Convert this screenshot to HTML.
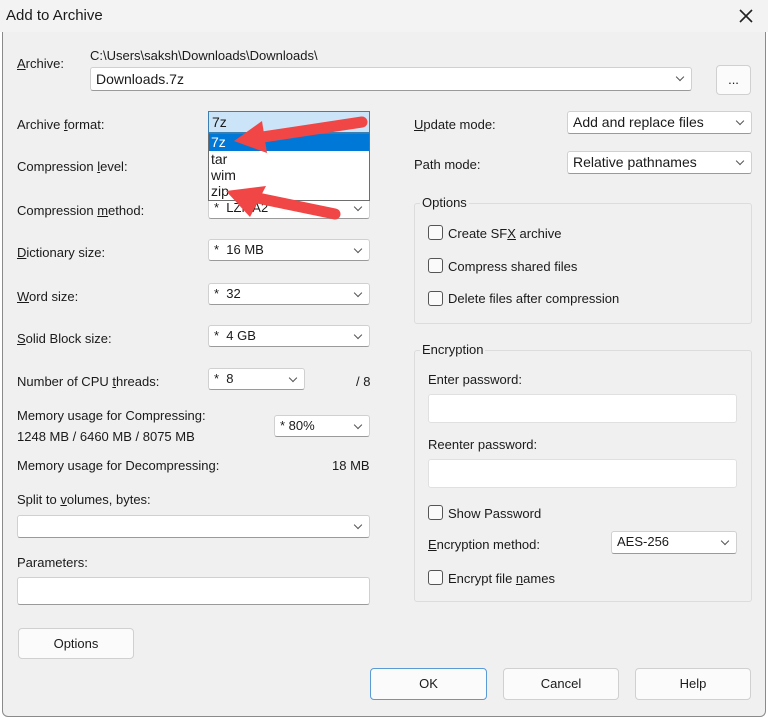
<!DOCTYPE html>
<html><head><style>
*{box-sizing:border-box;margin:0;padding:0}
body{width:768px;height:719px;background:#fff;font-family:"Liberation Sans",sans-serif;font-size:13px;color:#1a1a1a;position:relative;overflow:hidden}
.win{position:absolute;left:2px;top:0;width:764px;height:717px;background:#f0f0f0;border:1px solid #8a8a8a;border-top:none;border-radius:0 0 6px 6px}
.a{position:absolute;white-space:nowrap}
.box{position:absolute;background:#fff;border:1px solid #d0d0d0;border-bottom-color:#9a9a9a;border-radius:3px;padding-left:5px;line-height:20px;font-size:13px}
.dd::after{content:"";position:absolute;right:8px;top:6px;width:5px;height:5px;border-right:1px solid #555;border-bottom:1px solid #555;transform:rotate(45deg)}
.grp{position:absolute;border:1px solid #dcdcdc;border-radius:3px}
.cb{position:absolute;width:15px;height:15px;border:1px solid #555;border-radius:3px;background:#fafafa}
.btn{position:absolute;background:#fbfbfb;border:1px solid #d0d0d0;border-radius:4px;text-align:center;font-size:13px}
u{text-decoration:underline}
</style></head><body>
<div class="win"></div>
<div class="a" style="left:0;top:0;width:768px;height:32px;background:#f3f3f3"></div>
<div class="a" style="left:6px;top:7px;font-size:15px">Add to Archive</div>
<svg style="position:absolute;left:739px;top:9px" width="14" height="14"><path d="M1 1L13 13M13 1L1 13" stroke="#222" stroke-width="1.6"/></svg>

<div class="a" style="left:17px;top:56px"><u>A</u>rchive:</div>
<div class="a" style="left:90px;top:48px">C:\Users\saksh\Downloads\Downloads\</div>
<div class="box dd" style="left:90px;top:67px;width:602px;height:24px;line-height:22px;font-size:14px">Downloads.7z</div>
<div class="btn" style="left:716px;top:65px;width:35px;height:30px;line-height:28px">...</div>

<div class="a" style="left:17px;top:117px">Archive <u>f</u>ormat:</div>
<div class="a" style="left:17px;top:159px">Compression <u>l</u>evel:</div>
<div class="a" style="left:17px;top:203px">Compression <u>m</u>ethod:</div>
<div class="box dd" style="left:208px;top:197px;width:162px;height:22px">*&nbsp; LZMA2</div>
<div class="a" style="left:17px;top:245px"><u>D</u>ictionary size:</div>
<div class="box dd" style="left:208px;top:239px;width:162px;height:22px">*&nbsp; 16 MB</div>
<div class="a" style="left:17px;top:289px"><u>W</u>ord size:</div>
<div class="box dd" style="left:208px;top:283px;width:162px;height:22px">*&nbsp; 32</div>
<div class="a" style="left:17px;top:331px"><u>S</u>olid Block size:</div>
<div class="box dd" style="left:208px;top:325px;width:162px;height:22px">*&nbsp; 4 GB</div>
<div class="a" style="left:17px;top:374px">Number of CPU <u>t</u>hreads:</div>
<div class="box dd" style="left:208px;top:368px;width:97px;height:22px">*&nbsp; 8</div>
<div class="a" style="left:356px;top:374px">/ 8</div>
<div class="a" style="left:17px;top:408px">Memory usage for Compressing:</div>
<div class="a" style="left:17px;top:429px">1248 MB / 6460 MB / 8075 MB</div>
<div class="box dd" style="left:274px;top:415px;width:96px;height:22px">* 80%</div>
<div class="a" style="left:17px;top:458px">Memory usage for Decompressing:</div>
<div class="a" style="left:332px;top:458px">18 MB</div>
<div class="a" style="left:17px;top:492px">Split to <u>v</u>olumes, bytes:</div>
<div class="box dd" style="left:17px;top:515px;width:353px;height:23px"></div>
<div class="a" style="left:17px;top:555px">Parameters:</div>
<div class="box" style="left:17px;top:577px;width:353px;height:28px"></div>

<div class="a" style="left:208px;top:111px;width:162px;height:22px;background:#cce4f7;border:1px solid #3c7fb1;padding-left:3px;line-height:20px;font-size:14px">7z</div>
<div class="a" style="left:208px;top:133px;width:162px;height:68px;background:#fff;border:1px solid #6e6e6e;font-size:14px">
<div style="background:#0078d7;color:#fff;height:17px;line-height:17px;padding-left:2px">7z</div>
<div style="height:16px;line-height:16px;padding-left:2px">tar</div>
<div style="height:16px;line-height:16px;padding-left:2px">wim</div>
<div style="height:16px;line-height:16px;padding-left:2px">zip</div>
</div>

<div class="a" style="left:414px;top:117px"><u>U</u>pdate mode:</div>
<div class="box dd" style="left:567px;top:111px;width:185px;height:23px;font-size:14px">Add and replace files</div>
<div class="a" style="left:414px;top:157px">Path mode:</div>
<div class="box dd" style="left:567px;top:151px;width:185px;height:23px;font-size:14px">Relative pathnames</div>

<div class="grp" style="left:414px;top:203px;width:338px;height:121px"></div>
<div class="a" style="left:420px;top:195px;background:#f0f0f0;padding:0 2px">Options</div>
<div class="cb" style="left:428px;top:225px"></div><div class="a" style="left:448px;top:226px">Create SF<u>X</u> archive</div>
<div class="cb" style="left:428px;top:258px"></div><div class="a" style="left:448px;top:259px">Compress shared files</div>
<div class="cb" style="left:428px;top:291px"></div><div class="a" style="left:448px;top:291px">Delete files after compression</div>

<div class="grp" style="left:414px;top:350px;width:338px;height:252px"></div>
<div class="a" style="left:420px;top:342px;background:#f0f0f0;padding:0 2px">Encryption</div>
<div class="a" style="left:428px;top:372px">Enter password:</div>
<div class="box" style="left:428px;top:394px;width:309px;height:29px;border-color:#e0e0e0"></div>
<div class="a" style="left:428px;top:437px">Reenter password:</div>
<div class="box" style="left:428px;top:459px;width:309px;height:29px;border-color:#e0e0e0"></div>
<div class="cb" style="left:428px;top:505px"></div><div class="a" style="left:448px;top:506px">Show Password</div>
<div class="a" style="left:428px;top:537px"><u>E</u>ncryption method:</div>
<div class="box dd" style="left:611px;top:531px;width:126px;height:23px">AES-256</div>
<div class="cb" style="left:428px;top:570px"></div><div class="a" style="left:448px;top:571px">Encrypt file <u>n</u>ames</div>

<div class="btn" style="left:18px;top:628px;width:116px;height:31px;line-height:29px">Options</div>
<div class="btn" style="left:370px;top:668px;width:117px;height:32px;line-height:30px;border:1px solid #5a9ad6">OK</div>
<div class="btn" style="left:503px;top:668px;width:116px;height:32px;line-height:30px">Cancel</div>
<div class="btn" style="left:635px;top:668px;width:116px;height:32px;line-height:30px">Help</div>

<svg style="position:absolute;left:0;top:0" width="768" height="719">
<g stroke="#f04646" stroke-width="11" stroke-linecap="round" fill="none">
<line x1="362" y1="122" x2="256" y2="138"/>
<line x1="335" y1="214" x2="248" y2="196"/>
</g>
<polygon fill="#f04646" points="234,141 262,121 267,153"/>
<polygon fill="#f04646" points="226,191 266,186 250,217"/>
</svg>
</body></html>
